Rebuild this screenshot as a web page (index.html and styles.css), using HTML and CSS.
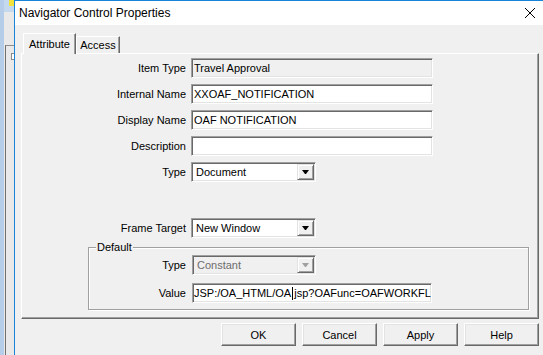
FILE: index.html
```html
<!DOCTYPE html>
<html lang="en">
<head>
    <meta charset="UTF-8">
    <title>Navigator Control Properties</title>
    <link rel="stylesheet" href="styles.css">
</head>
<body>

    <div class="screen">
        <!-- window behind the dialog -->
        <div class="behind">
            <div class="behind-top"><span class="behind-icon"></span></div>
            <div class="behind-tree"><span class="behind-node"></span></div>
        </div>

        <div class="dialog">
            <div class="titlebar">
                <span class="title">Navigator Control Properties</span>
                <svg class="close" width="10" height="10" viewBox="0 0 10 10">
                    <path d="M0 0 L10 10 M10 0 L0 10" stroke="#000" stroke-width="1" fill="none"/>
                </svg>
            </div>

            <div class="dialog-body">
                <div class="tabs">
                    <div class="tab active">Attribute</div>
                    <div class="tab">Access</div>
                </div>

                <div class="panel">
                    <div class="row">
                        <span class="label">Item Type</span>
                        <div class="field readonly">Travel Approval</div>
                    </div>
                    <div class="row">
                        <span class="label">Internal Name</span>
                        <div class="field">XXOAF_NOTIFICATION</div>
                    </div>
                    <div class="row">
                        <span class="label">Display Name</span>
                        <div class="field">OAF NOTIFICATION</div>
                    </div>
                    <div class="row">
                        <span class="label">Description</span>
                        <div class="field"></div>
                    </div>
                    <div class="row">
                        <span class="label">Type</span>
                        <div class="select">
                            <span class="select-value">Document</span>
                            <span class="select-btn"><span class="arrow"></span></span>
                        </div>
                    </div>
                    <div class="row frame-row">
                        <span class="label">Frame Target</span>
                        <div class="select">
                            <span class="select-value">New Window</span>
                            <span class="select-btn"><span class="arrow"></span></span>
                        </div>
                    </div>

                    <div class="group">
                        <span class="legend">Default</span>
                        <div class="row">
                            <span class="label">Type</span>
                            <div class="select disabled">
                                <span class="select-value">Constant</span>
                                <span class="select-btn"><span class="arrow"></span></span>
                            </div>
                        </div>
                        <div class="row">
                            <span class="label">Value</span>
                            <div class="field value">JSP:/OA_HTML/OA<span class="caret"></span>jsp?OAFunc=OAFWORKFL</div>
                        </div>
                    </div>
                </div>

                <div class="buttons">
                    <button class="btn">OK</button>
                    <button class="btn">Cancel</button>
                    <button class="btn">Apply</button>
                    <button class="btn">Help</button>
                </div>
            </div>
        </div>
    </div>

</body>
</html>
```

FILE: styles.css
```css
body {
    margin: 0;
    padding: 0;
    font-family: "Liberation Sans", Arial, sans-serif;
    font-size: 11px;
    color: #000;
    background-color: #f0f0f0;
}

.screen {
    display: flex;
    width: 543px;
    height: 355px;
    overflow: hidden;
}

/* the other window, left edge */
.behind {
    width: 10px;
    border-left: 4px solid #b6cde9;
    background-color: #e9e9e9;
    display: flex;
    flex-direction: column;
}

.behind-top {
    height: 12px;
    background-color: #c4d8ee;
    display: flex;
    justify-content: flex-end;
    margin-bottom: 33px;
}

.behind-icon {
    width: 5px;
    height: 6px;
    background-color: #f2e23c;
}

.behind-tree {
    flex: 1;
    margin-left: 1px;
    border-top: 1px solid #8c8c8c;
    border-left: 1px solid #6f6f6f;
}

.behind-node {
    display: block;
    width: 4px;
    height: 5px;
    margin: 7px 0 0 5px;
    border: 1px solid #8c8c8c;
    border-right: none;
    background-color: #fff;
}

/* dialog */
.dialog {
    flex: 1;
    border-left: 1px solid #1883d7;
    border-top: 1px solid #1883d7;
    background-color: #f0f0f0;
    display: flex;
    flex-direction: column;
}

.titlebar {
    height: 24px;
    background-color: #fff;
    display: flex;
    align-items: center;
    padding-left: 4px;
}

.title {
    font-size: 12px;
}

.close {
    margin-left: auto;
    margin-right: 8px;
}

.dialog-body {
    padding: 8px 0 0 6px;
}

.tabs {
    display: flex;
    align-items: flex-end;
    height: 20px;
    margin-left: 2px;
}

.tab {
    box-sizing: border-box;
    height: 17px;
    border: 1px solid;
    border-color: #fff #696969 transparent #fff;
    border-bottom: none;
    box-shadow: inset -1px 0 0 #a0a0a0;
    text-align: center;
    line-height: 14px;
    padding-top: 1px;
}

.tab.active {
    position: relative;
    z-index: 1;
    width: 53px;
    height: 21px;
    margin-bottom: -1px;
    padding-top: 3px;
    background-color: #f0f0f0;
}

.tab:not(.active) {
    width: 44px;
}

.panel {
    width: 518px;
    box-sizing: border-box;
    border: 1px solid;
    border-color: #fff #696969 #696969 #fff;
    box-shadow: inset -1px -1px 0 #a0a0a0;
    padding: 4px 0 8px 0;
}

.row {
    display: flex;
    align-items: center;
    height: 20px;
    margin-bottom: 6px;
}

.label {
    width: 169px;
    box-sizing: border-box;
    padding-right: 5px;
    text-align: right;
}

.frame-row {
    margin-top: 36px;
    margin-bottom: 0;
}

.field {
    width: 242px;
    height: 20px;
    box-sizing: border-box;
    border: 1px solid;
    border-color: #a0a0a0 #fff #fff #a0a0a0;
    box-shadow: inset 1px 1px 0 #696969, inset -1px -1px 0 #e3e3e3;
    background-color: #fff;
    padding: 0 2px;
    line-height: 18px;
    white-space: nowrap;
    overflow: hidden;
}

.field.readonly {
    background-color: #f0f0f0;
}

.field.value {
    width: 240px;
    padding-left: 1px;
}

.caret {
    display: inline-block;
    width: 1px;
    height: 13px;
    margin: 0 1px;
    vertical-align: -3px;
    background-color: #000;
}

.select {
    width: 125px;
    height: 20px;
    box-sizing: border-box;
    display: flex;
    padding: 1px;
    border: 1px solid;
    border-color: #a0a0a0 #fff #fff #a0a0a0;
    box-shadow: inset 1px 1px 0 #696969, inset -1px -1px 0 #e3e3e3;
    background-color: #fff;
}

.select-value {
    flex: 1;
    padding-left: 3px;
    line-height: 16px;
}

.select-btn {
    width: 17px;
    box-sizing: border-box;
    display: flex;
    align-items: center;
    justify-content: center;
    border: 1px solid;
    border-color: #e3e3e3 #696969 #696969 #e3e3e3;
    box-shadow: inset 1px 1px 0 #fff, inset -1px -1px 0 #a0a0a0;
    background-color: #f0f0f0;
}

.arrow {
    width: 1px;
    height: 0;
    border-left: 3px solid transparent;
    border-right: 3px solid transparent;
    border-top: 4px solid #000;
}

.select.disabled {
    width: 124px;
    background-color: #f0f0f0;
    color: #6d6d6d;
}

.select.disabled .arrow {
    border-top-color: #a0a0a0;
}

/* Default group box */
.group {
    position: relative;
    margin: 9px 9px 0 66px;
    padding: 7px 0 6px 0;
    border: 1px solid #a0a0a0;
    box-shadow: inset 1px 1px 0 #fff, 1px 1px 0 #fff;
}

.group .row {
    margin-bottom: 8px;
}

.group .row:last-child {
    margin-bottom: 0;
}

.group .label {
    width: 103px;
    padding-right: 6px;
}

.legend {
    position: absolute;
    left: 7px;
    top: -8px;
    padding: 0 1px;
    line-height: 14px;
    background-color: #f0f0f0;
}

/* bottom buttons */
.buttons {
    width: 518px;
    display: flex;
    justify-content: flex-end;
    gap: 6px;
    margin-top: 4px;
}

.btn {
    width: 75px;
    height: 23px;
    box-sizing: border-box;
    padding: 0;
    border: 1px solid;
    border-color: #fff #696969 #696969 #fff;
    box-shadow: inset -1px -1px 0 #a0a0a0, inset 1px 1px 0 #e3e3e3;
    background-color: #f0f0f0;
    font: inherit;
    color: #000;
}
```
